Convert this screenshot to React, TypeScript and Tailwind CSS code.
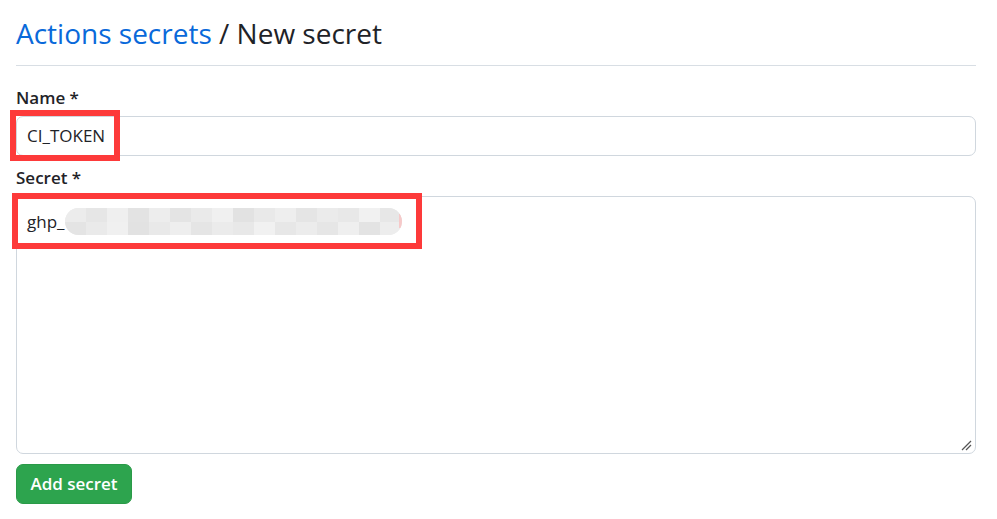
import React from "react";

const font = { fontFamily: '"Open Sans", "Noto Sans", sans-serif' };

function Blob() {
  const cells = ["#ececec", "#e6e6e6", "#efefef", "#e3e3e3", "#ededed", "#e4e4e4", "#eaeaea", "#f0f0f0", "#e2e2e2", "#e9e9e9", "#eeeeee", "#e5e5e5", "#ebebeb", "#e8e8e8", "#f1f1f1", "#e7e7e7"];
  return (
    <div className="relative h-[27px] w-[337px] rounded-full bg-[#ececec] overflow-hidden flex">
      {cells.map((c, i) => (
        <div key={i} className="h-full flex flex-col flex-1">
          <div className="flex-1" style={{ background: c }} />
          <div className="flex-1" style={{ background: cells[(i + 5) % cells.length] }} />
        </div>
      ))}
      <div className="absolute right-0 top-[6px] h-[14px] w-[3px] bg-[#f6c9c9]" />
    </div>
  );
}

export default function App() {
  return (
    <div className="w-[997px] h-[519px] bg-white text-[#1f2328] px-[16px]" style={font}>
      <div className="w-[960px]">
        <div className="h-[66px] border-b border-[#d8dee4] pt-[14px]">
          <h1 className="text-[28px] leading-[38px] font-normal">
            <a className="text-[#0969da]">Actions secrets</a> / New secret
          </h1>
        </div>
        <div className="pt-[19px]">
          <label className="block text-[17px] font-semibold leading-[26px] h-[26px]">Name *</label>
          <div className="relative mt-[5px]">
            <div className="h-[40px] border border-[#d0d7de] rounded-[7px] flex items-center pl-[10px] text-[17px]">
              CI_TOKEN
            </div>
            <div className="absolute left-[-6px] top-[-6px] w-[110px] h-[51px] border-[6px] border-[#fd3a3a]" />
          </div>
          <label className="block mt-[9px] text-[17px] font-semibold leading-[26px] h-[26px]">Secret *</label>
          <div className="relative mt-[5px]">
            <div className="h-[258px] border border-[#d0d7de] rounded-[7px] pl-[10px] pt-[11px] text-[17px] leading-[26px] relative">
              <div className="flex items-center">
                <span>ghp_</span>
                <Blob />
              </div>
              <svg className="absolute right-[3px] bottom-[2px]" width="11" height="11" viewBox="0 0 11 11">
                <line x1="1" y1="10" x2="10" y2="1" stroke="#555" strokeWidth="1.3" />
                <line x1="5" y1="10" x2="10" y2="5" stroke="#555" strokeWidth="1.3" />
              </svg>
            </div>
            <div className="absolute left-[-4px] top-[-3px] w-[410px] h-[56px] border-[6px] border-[#fd3a3a]" />
          </div>
          <button className="mt-[10px] h-[40px] w-[116px] rounded-[7px] bg-[#2da44e] border border-[#2a9a48] text-white text-[17px] font-semibold">
            Add secret
          </button>
        </div>
      </div>
    </div>
  );
}
